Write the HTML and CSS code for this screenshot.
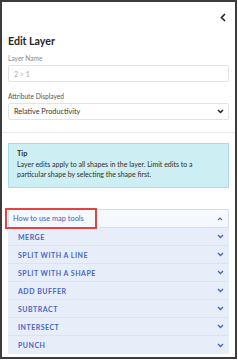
FILE: index.html
```html
<!DOCTYPE html>
<html>
<head>
<meta charset="utf-8">
<link rel="stylesheet" href="styles.css">
</head>
<body>
<div class="frame">
  <div class="top">
    <div class="back-row">
      <svg class="back" width="6" height="9" viewBox="0 0 6 9"><path d="M5 1 L1.5 4.5 L5 8" fill="none" stroke="#222" stroke-width="1.6"/></svg>
    </div>
    <h1 class="title">Edit Layer</h1>
    <div class="label">Layer Name</div>
    <div class="input">2 &gt; 1</div>
    <div class="label label-2">Attribute Displayed</div>
    <div class="select">
      <span>Relative Productivity</span>
      <svg width="7" height="5" viewBox="0 0 7 5"><path d="M1 1 L3.5 3.5 L6 1" fill="none" stroke="#222" stroke-width="1.5"/></svg>
    </div>
  </div>
  <div class="lower">
    <div class="tip">
      <div class="tip-title">Tip</div>
      <div class="tip-text">Layer edits apply to all shapes in the layer. Limit edits to a particular shape by selecting the shape first.</div>
    </div>
    <div class="acc">
      <div class="acc-head">
        <span>How to use map tools</span>
        <svg width="6" height="4" viewBox="0 0 6 4"><path d="M1 3 L3 1 L5 3" fill="none" stroke="#4a66c4" stroke-width="1.1"/></svg>
        <div class="highlight"></div>
      </div>
      <div class="item"><span>MERGE</span><svg width="7" height="5" viewBox="0 0 7 5"><path d="M1 1 L3.5 3.5 L6 1" fill="none" stroke="#4a66c4" stroke-width="1.4"/></svg></div>
      <div class="item"><span>SPLIT WITH A LINE</span><svg width="7" height="5" viewBox="0 0 7 5"><path d="M1 1 L3.5 3.5 L6 1" fill="none" stroke="#4a66c4" stroke-width="1.4"/></svg></div>
      <div class="item"><span>SPLIT WITH A SHAPE</span><svg width="7" height="5" viewBox="0 0 7 5"><path d="M1 1 L3.5 3.5 L6 1" fill="none" stroke="#4a66c4" stroke-width="1.4"/></svg></div>
      <div class="item"><span>ADD BUFFER</span><svg width="7" height="5" viewBox="0 0 7 5"><path d="M1 1 L3.5 3.5 L6 1" fill="none" stroke="#4a66c4" stroke-width="1.4"/></svg></div>
      <div class="item"><span>SUBTRACT</span><svg width="7" height="5" viewBox="0 0 7 5"><path d="M1 1 L3.5 3.5 L6 1" fill="none" stroke="#4a66c4" stroke-width="1.4"/></svg></div>
      <div class="item"><span>INTERSECT</span><svg width="7" height="5" viewBox="0 0 7 5"><path d="M1 1 L3.5 3.5 L6 1" fill="none" stroke="#4a66c4" stroke-width="1.4"/></svg></div>
      <div class="item"><span>PUNCH</span><svg width="7" height="5" viewBox="0 0 7 5"><path d="M1 1 L3.5 3.5 L6 1" fill="none" stroke="#4a66c4" stroke-width="1.4"/></svg></div>
    </div>
  </div>
</div>
</body>
</html>
```
FILE: styles.css
```css
html, body { margin: 0; padding: 0; background: #fff; }
body { font-family: Lato, "Open Sans", sans-serif; color: #2b2b2b; }
.frame {
  box-sizing: border-box;
  width: 237px;
  height: 359px;
  border: 2px solid #3c3c3c;
  overflow: hidden;
}
.top {
  padding: 0 6px 12px 6px;
  border-bottom: 1px solid #ececec;
}
.back-row {
  height: 32px;
  display: flex;
  justify-content: flex-end;
  align-items: flex-start;
}
.back { margin-top: 11px; margin-right: 3px; }
.title {
  margin: 0;
  font-size: 10.6px;
  line-height: 14px;
  font-weight: 700;
  color: #262626;
}
.label {
  margin-top: 5px;
  font-size: 6.6px;
  line-height: 10px;
  color: #8a8a8a;
}
.label-2 { margin-top: 9px; color: #555; }
.input, .select {
  box-sizing: border-box;
  margin-top: 2px;
  height: 17px;
  border: 1px solid #e3e3e3;
  border-radius: 2px;
  padding: 0 5px;
  font-size: 7px;
  display: flex;
  align-items: center;
}
.input { color: #a9a9a9; }
.select { justify-content: space-between; color: #333; font-size: 7.3px; padding-right: 4px; }
.lower { padding: 10px 6px 0 6px; }
.tip {
  box-sizing: border-box;
  height: 45px;
  background: #cdeef3;
  border: 1px solid #a6dce6;
  padding: 5px 8px 0 8px;
  font-size: 7px;
  line-height: 10px;
  color: #2d2d2d;
}
.tip-title { font-weight: 700; font-size: 7.3px; }
.acc { margin-top: 21px; }
.acc-head {
  position: relative;
  box-sizing: border-box;
  height: 19px;
  background: #f5f8fd;
  border: 1px solid #d3def1;
  border-radius: 2px 2px 0 0;
  padding: 0 5px 0 4px;
  display: flex;
  align-items: center;
  justify-content: space-between;
  font-size: 7.4px;
  color: #3f5ebf;
}
.highlight {
  position: absolute;
  left: -4px;
  top: -2px;
  width: 92px;
  height: 21px;
  box-sizing: border-box;
  border: 2px solid #e5433f;
}
.item {
  box-sizing: border-box;
  height: 18px;
  background: #e7eefa;
  border-bottom: 1px solid #d9e3f3;
  padding: 0 5px 0 10px;
  display: flex;
  align-items: center;
  justify-content: space-between;
  font-size: 7px;
  letter-spacing: 0.5px;
  font-weight: 700;
  color: #4866c6;
}
.item:last-child { border-bottom: none; }
```
